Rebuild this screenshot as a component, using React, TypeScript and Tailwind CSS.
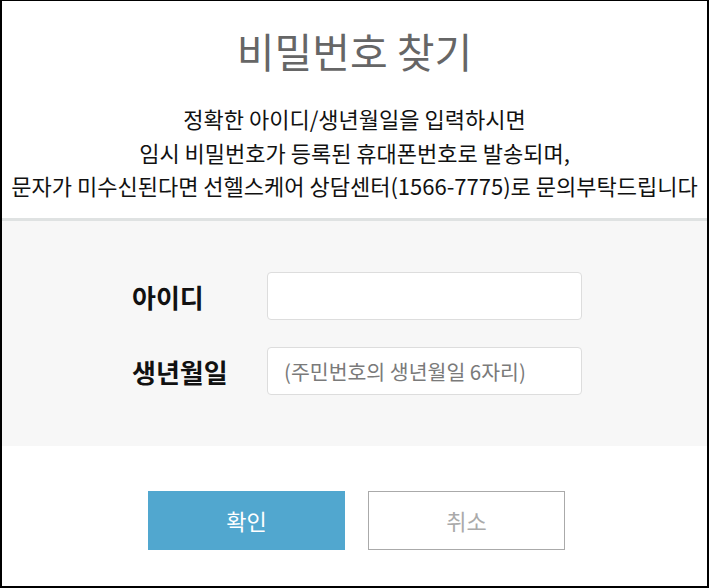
const font = { fontFamily: '"Noto Sans CJK KR", "Noto Sans", sans-serif' };

export default function App() {
  return (
    <div
      className="flex h-[588px] w-[709px] flex-col border-x-2 border-t border-b-2 border-black bg-white"
      style={font}
    >
      {/* 안내 문구 */}
      <div className="flex h-[217px] flex-col items-center pt-[27px]">
        <h1 className="text-[41px] font-normal leading-[44px] text-[#666666]">
          비밀번호 찾기
        </h1>
        <div className="mt-[30px] text-center text-[22px] leading-[33.5px] text-[#111111]">
          <p className="whitespace-nowrap">정확한 아이디/생년월일을 입력하시면</p>
          <p className="whitespace-nowrap">임시 비밀번호가 등록된 휴대폰번호로 발송되며,</p>
          <p className="whitespace-nowrap">
            문자가 미수신된다면 선헬스케어 상담센터(1566-7775)로 문의부탁드립니다
          </p>
        </div>
      </div>

      {/* 입력 폼 */}
      <div className="h-[228px] border-t-[3px] border-[#dfe2e2] bg-[#f7f7f7] pt-[51px]">
        <div className="flex flex-col gap-[27px] pl-[130px]">
          <label className="flex items-center">
            <span className="w-[135px] text-[26px] font-bold text-[#111111]">아이디</span>
            <input
              type="text"
              className="h-[48px] w-[315px] rounded-[4px] border border-[#dddddd] bg-white px-4 text-[20.5px] outline-none"
            />
          </label>
          <label className="flex items-center">
            <span className="w-[135px] text-[26px] font-bold text-[#111111]">생년월일</span>
            <input
              type="text"
              placeholder="(주민번호의 생년월일 6자리)"
              className="h-[48px] w-[315px] rounded-[4px] border border-[#dddddd] bg-white px-4 text-[20.5px] outline-none placeholder:text-[#7a7a7a]"
            />
          </label>
        </div>
      </div>

      {/* 버튼 */}
      <div className="flex flex-1 items-start justify-center gap-[23px] pl-[4px] pt-[45px]">
        <button className="h-[59px] w-[197px] bg-[#51a7cf] text-[22px] text-white">확인</button>
        <button className="h-[59px] w-[197px] border border-[#aaaaaa] bg-white text-[22px] text-[#aaaaaa]">
          취소
        </button>
      </div>
    </div>
  );
}
